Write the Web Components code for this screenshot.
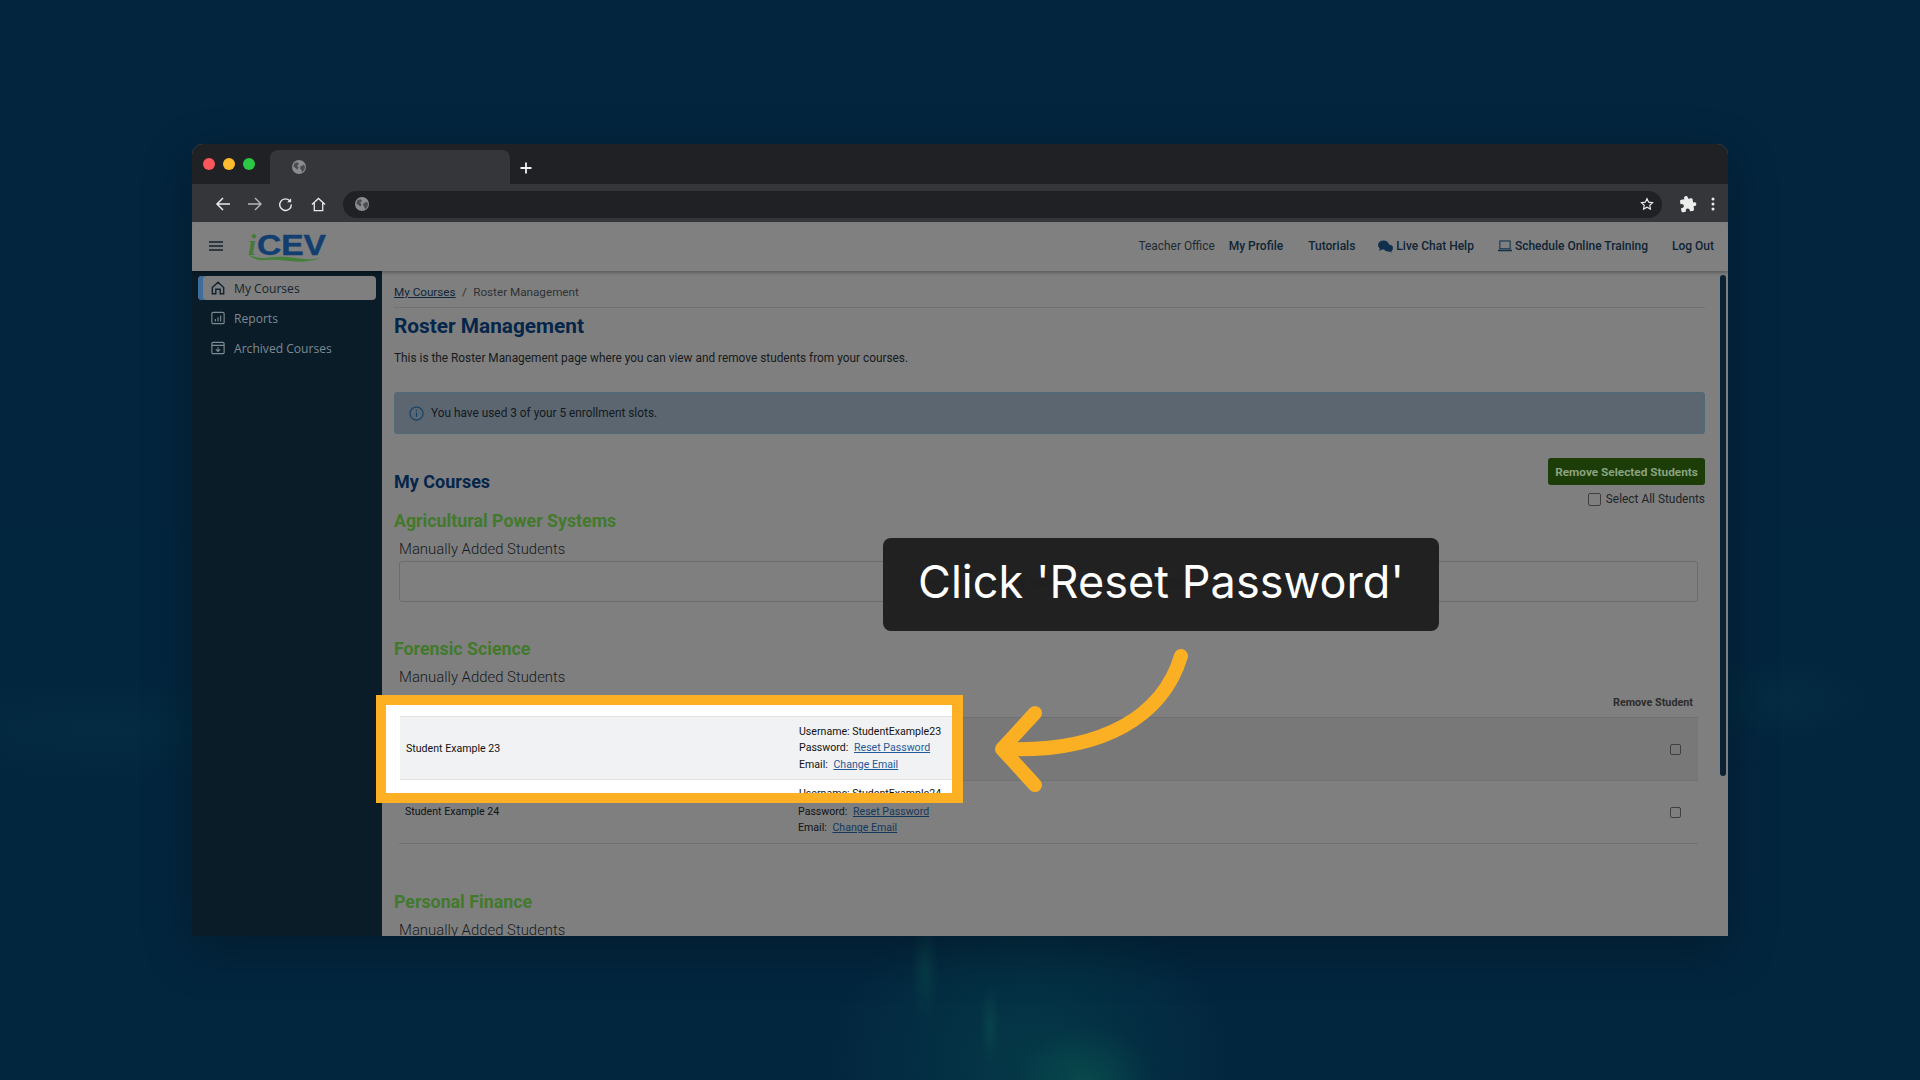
<!DOCTYPE html>
<html>
<head>
<meta charset="utf-8">
<title>Roster Management</title>
<style>
  html, body { margin: 0; padding: 0; height: 100%; overflow: hidden; background: #03243c; }
</style>
</head>
<body>
<tutorial-stage>
  <browser-window>
    <app-header slot="header"></app-header>
    <side-nav slot="side"></side-nav>
    <roster-page slot="main"></roster-page>
  </browser-window>
</tutorial-stage>

<script>
const GLOBE = (size) => `<svg width="${size}" height="${size}" viewBox="0 0 16 16"><circle cx="8" cy="8" r="8" fill="#8a8c8f"/><path d="M3 3.5 6.5 2.5 8 4.5 6 6.5 7.5 8.5 6 11 4 9 1.5 7.5ZM10 7l3.5-1.5 1.5 2.5-1 3.5-2.5 2.5-1-3-1.5-2Z" fill="#4b4d50"/></svg>`;

class TutorialStage extends HTMLElement {
  constructor() {
    super();
    this.attachShadow({ mode: 'open' }).innerHTML = `
      <style>
        :host {
          display: block;
          position: relative;
          width: 1920px;
          height: 1080px;
          box-sizing: border-box;
          padding: 144px 192px;
          overflow: hidden;
          background:
            radial-gradient(ellipse 70px 60px at 1085px 1085px, rgba(14, 105, 85, .42), transparent),
            radial-gradient(ellipse 10px 40px at 990px 1025px, rgba(16, 100, 85, .3), transparent),
            radial-gradient(ellipse 14px 50px at 925px 970px, rgba(16, 100, 85, .3), transparent),
            radial-gradient(ellipse 200px 170px at 1030px 1060px, rgba(6, 75, 80, .5), transparent),
            radial-gradient(ellipse 210px 50px at 100px 730px, rgba(6, 75, 80, .14), transparent),
            radial-gradient(ellipse 90px 40px at 1780px 700px, rgba(6, 75, 80, .16), transparent),
            linear-gradient(#03253e, #03263f);
        }
      </style>
      <slot></slot>
      <highlight-frame></highlight-frame>
      <svg style="position:absolute;left:985px;top:640px" width="210" height="160" viewBox="985 640 210 160" fill="none" stroke="#fbb024" stroke-width="14" stroke-linecap="round" stroke-linejoin="round">
        <path d="M1181 656C1163 716 1103 753 1004 749"/>
        <path d="M1035 713 1002 749 1035 785"/>
      </svg>
      <step-callout>Click 'Reset Password'</step-callout>
    `;
  }
}

class BrowserWindow extends HTMLElement {
  constructor() {
    super();
    this.attachShadow({ mode: 'open' }).innerHTML = `
      <style>
        :host {
          display: flex;
          flex-direction: column;
          width: 1536px;
          height: 792px;
          border-radius: 11px 11px 0 0;
          overflow: hidden;
          background: #7f7f7f;
          box-shadow: 0 14px 50px rgba(0, 0, 0, .28);
          font-family: Roboto, "Liberation Sans", sans-serif;
        }
        .tabs { height: 40px; background: #202124; display: flex; align-items: flex-end; flex: none; }
        .lights { display: flex; gap: 8px; padding: 0 0 14px 11px; width: 67px; box-sizing: content-box; }
        .lights i { width: 12px; height: 12px; border-radius: 50%; }
        .tab {
          width: 240px; height: 34px; background: #35363a; border-radius: 8px 8px 0 0;
          display: flex; align-items: center; padding-left: 22px; box-sizing: border-box; margin-left: 0;
        }
        .plus { margin: 0 0 9px 9px; display: flex; }
        .bar { height: 38px; padding-top: 2px; box-sizing: border-box; background: #35363a; display: flex; align-items: center; flex: none; }
        .nav { display: flex; align-items: center; width: 151px; padding-left: 23px; box-sizing: border-box; }
        .nav svg { display: block; flex: none; }
        .url {
          width: 1319px; height: 27px; background: #202124; border-radius: 14px; flex: none;
          display: flex; align-items: center; justify-content: space-between; padding: 0 8px 0 12px; box-sizing: border-box;
        }
        .ext { display: flex; align-items: center; margin-left: 17px; }
        .body { flex: 1; display: grid; grid-template-columns: 190px 1fr; min-height: 0; }
        .body ::slotted(roster-page) { min-height: 0; }
      </style>
      <div class="tabs">
        <div class="lights"><i style="background:#f9575c"></i><i style="background:#febc2e"></i><i style="background:#2ac845"></i></div>
        <div class="tab">${GLOBE(14)}</div>
        <div class="plus"><svg width="14" height="14" viewBox="0 0 14 14"><path d="M7 1.5v11M1.5 7h11" stroke="#f2f2f2" stroke-width="1.8"/></svg></div>
      </div>
      <div class="bar">
        <div class="nav">
          <svg width="16" height="16" viewBox="0 0 16 16" fill="none" stroke="#e8eaed" stroke-width="1.5" style="margin-right:16px"><path d="M15 8H2M8 2 2 8l6 6"/></svg>
          <svg width="16" height="16" viewBox="0 0 16 16" fill="none" stroke="#b4b6b9" stroke-width="1.4" style="margin-right:15px"><path d="M1 8h13M8 2l6 6-6 6"/></svg>
          <svg width="15" height="15" viewBox="0 0 16 16" fill="none" stroke="#e8eaed" stroke-width="1.5" style="margin-right:18px"><path d="M13 4.5A6.2 6.2 0 1 0 14.2 8"/><path d="M14 1.2v4.3H9.7Z" fill="#e8eaed" stroke="none"/></svg>
          <svg width="15" height="15" viewBox="0 0 16 16" fill="none" stroke="#e8eaed" stroke-width="1.4"><path d="M1 8 8 1.5 15 8M3.5 6.5V14.5h9V6.5"/></svg>
        </div>
        <div class="url">
          ${GLOBE(14)}
          <svg width="14" height="14" viewBox="0 0 24 24" fill="none" stroke="#e8eaed" stroke-width="2"><path d="m12 2.8 2.9 6 6.6.8-4.8 4.6 1.2 6.6-5.9-3.2-5.9 3.2 1.2-6.6L2.5 9.6l6.6-.8Z"/></svg>
        </div>
        <div class="ext">
          <svg width="18" height="18" viewBox="0 0 24 24" fill="#eceded" style="transform:rotate(-8deg)"><path d="M20.5 11H19V7c0-1.1-.9-2-2-2h-4V3.5C13 2.12 11.88 1 10.5 1S8 2.12 8 3.5V5H4c-1.1 0-1.99.9-1.99 2v3.8H3.5c1.49 0 2.7 1.21 2.7 2.7s-1.21 2.7-2.7 2.7H2V20c0 1.1.9 2 2 2h3.8v-1.5c0-1.49 1.21-2.7 2.7-2.7 1.49 0 2.7 1.21 2.7 2.7V22H17c1.1 0 2-.9 2-2v-4h1.5c1.38 0 2.5-1.12 2.5-2.5S21.88 11 20.5 11z"/></svg>
          <svg width="4" height="14" viewBox="0 0 4 14" fill="#e8eaed" style="margin-left:14px"><circle cx="2" cy="2" r="1.5"/><circle cx="2" cy="7" r="1.5"/><circle cx="2" cy="12" r="1.5"/></svg>
        </div>
      </div>
      <slot name="header"></slot>
      <div class="body">
        <slot name="side"></slot>
        <slot name="main"></slot>
      </div>
    `;
  }
}

class AppHeader extends HTMLElement {
  constructor() {
    super();
    this.attachShadow({ mode: 'open' }).innerHTML = `
      <style>
        :host {
          display: flex;
          align-items: center;
          flex: none;
          height: 49px;
          background: #808080;
          border-radius: 8px 8px 0 0;
          box-shadow: 0 2px 3px rgba(0, 0, 0, .25);
          position: relative;
          z-index: 1;
          padding: 0 14px 1px 17px;
          box-sizing: border-box;
          color: #0f2435;
          font: 500 12px Roboto, sans-serif;
        }
        .logo { display: block; margin-left: 25px; }
        nav { margin-left: auto; display: flex; align-items: center; white-space: nowrap; }
        nav span { display: flex; align-items: center; gap: 3px; }
        nav .plain { font-weight: 400; font-size: 11.9px; color: #232b31; }
      </style>
      <svg width="14" height="10" viewBox="0 0 14 10" stroke="#15222c" stroke-width="1.4"><path d="M0 1h14M0 5h14M0 9h14"/></svg>
      <svg class="logo" width="80" height="32" viewBox="0 0 80 32">
        <text x="0" y="25" font-family="Liberation Serif, serif" font-style="italic" font-weight="700" font-size="29" fill="#437a3a">i</text>
        <text x="9" y="25" font-family="Liberation Sans, sans-serif" font-weight="700" font-size="29" fill="#123f70" stroke="#123f70" stroke-width=".5" textLength="69" lengthAdjust="spacingAndGlyphs">CEV</text>
        <path d="M1 25C16 31 22 26 38 27S58 31 72 28C58 34 44 31 30 30S10 33 1 25Z" fill="#437f38"/>
      </svg>
      <nav>
        <span class="plain" style="margin-right:14px">Teacher Office</span>
        <span style="margin-right:25px">My Profile</span>
        <span style="margin-right:23px">Tutorials</span>
        <span style="margin-right:24px">
          <svg width="15" height="13" viewBox="0 0 15 13" fill="#0f2f4d"><ellipse cx="5.5" cy="5" rx="5.5" ry="4.5"/><path d="M2 8 1 11l4-2Z"/><ellipse cx="10.5" cy="8" rx="4.5" ry="3.6"/><path d="m12.5 10 1.5 2.6-4-1.6Z"/></svg>
          Live Chat Help
        </span>
        <span style="margin-right:24px">
          <svg width="14" height="12" viewBox="0 0 15 12" fill="none" stroke="#0f2f4d" stroke-width="1.1"><rect x="2" y=".6" width="11" height="8.4"/><path d="M0 10.8h15" stroke-width="1.5"/></svg>
          Schedule Online Training
        </span>
        <span>Log Out</span>
      </nav>
    `;
  }
}

class SideNav extends HTMLElement {
  constructor() {
    super();
    this.attachShadow({ mode: 'open' }).innerHTML = `
      <style>
        :host {
          display: flex;
          flex-direction: column;
          gap: 6px;
          height: 100%;
          box-sizing: border-box;
          padding: 5px 6px 0 6px;
          background: #0a1c27;
        }
      </style>
      <nav-item active label="My Courses"><svg width="14" height="14" viewBox="0 0 16 16" fill="none" stroke="#12222e" stroke-width="1.6"><path d="M1.5 7.5 8 1.5l6.5 6v7h-4v-5h-5v5h-4Z"/></svg></nav-item>
      <nav-item label="Reports"><svg width="14" height="14" viewBox="0 0 16 16" fill="none" stroke="#7d8a92" stroke-width="1.3"><rect x="1" y="1.5" width="14" height="13" rx="1.5"/><path d="M5 12V9M8 12V7M11 12V5"/></svg></nav-item>
      <nav-item label="Archived Courses"><svg width="14" height="14" viewBox="0 0 16 16" fill="none" stroke="#7d8a92" stroke-width="1.3"><rect x="1" y="1.5" width="14" height="13" rx="1.5"/><path d="M1 5h14M8 7v5M5.5 9.5 8 12l2.5-2.5"/></svg></nav-item>
    `;
  }
}

class NavItem extends HTMLElement {
  constructor() {
    super();
    this.attachShadow({ mode: 'open' });
  }

  connectedCallback() {
    this.shadowRoot.innerHTML = `
      <style>
        :host {
          display: flex;
          align-items: center;
          height: 24px;
          gap: 9px;
          padding-left: 13px;
          border-radius: 4px;
          color: #7d8a92;
          font: 500 12.1px "Open Sans", sans-serif;
        }
        :host([active]) {
          background: #7f7f7f;
          color: #14232e;
          box-shadow: inset 5px 0 0 #3f6d9b;
        }
        ::slotted(svg) { display: block; }
      </style>
      <slot></slot><span>${this.getAttribute('label')}</span>
    `;
  }
}

class RosterPage extends HTMLElement {
  constructor() {
    super();
    this.attachShadow({ mode: 'open' }).innerHTML = `
      <style>
        :host {
          display: block;
          position: relative;
          height: 100%;
          overflow: hidden;
          box-sizing: border-box;
          padding: 13px 23px 0 12px;
          background: #7f7f7f;
          color: #161a1d;
          font: 400 11.85px/16px Roboto, sans-serif;
        }
        .crumbs { color: #2d3236; padding-bottom: 7px; border-bottom: 1px solid #707070; font-size: 11.7px; }
        .crumbs a { color: #10263a; text-decoration: underline; }
        .crumbs i { font-style: normal; margin: 0 3.5px; }
        h1 { margin: 6px 0 0; font: 700 20.8px/24px Roboto, sans-serif; color: #05264a; }
        .lead { margin: 12px 0 0; }
        .alert {
          margin-top: 26px;
          height: 42px;
          box-sizing: border-box;
          display: flex;
          align-items: center;
          gap: 7px;
          padding-left: 14px;
          background: #5b6670;
          border: 1px solid #4f6a78;
          border-radius: 3px;
          color: #14191e;
        }
        .head { margin-top: 24px; display: flex; justify-content: space-between; height: 49px; }
        h2 { margin: 12px 0 0; font: 700 18px/24px Roboto, sans-serif; color: #05264a; }
        .actions { display: flex; flex-direction: column; align-items: flex-end; }
        .remove {
          height: 27px; width: 157px; display: flex; align-items: center; justify-content: center;
          background: #1c3c08; color: #8aa380; font-weight: 700; font-size: 11.8px; border-radius: 3px;
        }
        .all { display: flex; align-items: center; gap: 5px; margin-top: 6px; color: #1f2428; font-size: 11.9px; }
        .box { width: 11px; height: 11px; border: 1px solid #3f3f3f; border-radius: 2px; }
        .scroll { position: absolute; right: 2px; top: 4px; width: 6px; height: 501px; border-radius: 3px; background: #0a2233; }
        .empty {
          height: 41px; display: flex; align-items: center; justify-content: center;
          border: 1px solid #6c6c6c; border-radius: 3px; box-sizing: border-box; margin-top: 1px;
        }
        .table-head { margin-top: 7px; height: 22px; text-align: right; padding-right: 5px; font-weight: 700; color: #2c2c2c; font-size: 10.8px; }
      </style>
      <div class="crumbs"><a>My Courses</a> <i>/</i> Roster Management</div>
      <h1>Roster Management</h1>
      <p class="lead">This is the Roster Management page where you can view and remove students from your courses.</p>
      <div class="alert">
        <svg width="15" height="15" viewBox="0 0 16 16" fill="none" stroke="#0f3f66" stroke-width="1.2"><circle cx="8" cy="8" r="7"/><path d="M8 7v4.5M8 4.2v1.4"/></svg>
        You have used 3 of your 5 enrollment slots.
      </div>
      <div class="head">
        <h2>My Courses</h2>
        <div class="actions">
          <div class="remove">Remove Selected Students</div>
          <div class="all"><div class="box"></div>Select All Students</div>
        </div>
      </div>
      <course-section title="Agricultural Power Systems" top="2">
        <div class="empty">There are no manually added students in this course.</div>
      </course-section>
      <course-section title="Forensic Science" top="35">
        <div class="table-head">Remove Student</div>
        <student-row name="Student Example 23" user="StudentExample23" shaded></student-row>
        <student-row name="Student Example 24" user="StudentExample24"></student-row>
      </course-section>
      <course-section title="Personal Finance" top="46"></course-section>
      <div class="scroll"></div>
    `;
  }
}

class CourseSection extends HTMLElement {
  constructor() {
    super();
    this.attachShadow({ mode: 'open' });
  }

  connectedCallback() {
    this.shadowRoot.innerHTML = `
      <style>
        :host { display: block; margin-top: ${this.getAttribute('top')}px; }
        h3 { margin: 0; font: 700 17.8px/24px Roboto, sans-serif; color: #42792c; }
        .sub { margin: 6px 0 0 5px; font: 300 14.9px/21px Roboto, sans-serif; color: #161a1d; }
        .body { margin-left: 5px; margin-right: 7px; }
      </style>
      <h3>${this.getAttribute('title')}</h3>
      <div class="sub">Manually Added Students</div>
      <div class="body"><slot></slot></div>
    `;
  }
}

class StudentRow extends HTMLElement {
  constructor() {
    super();
    this.attachShadow({ mode: 'open' });
  }

  connectedCallback() {
    this.shadowRoot.innerHTML = `
      <style>
        :host {
          display: grid;
          grid-template-columns: 399px 1fr 40px;
          align-items: center;
          width: 1299px;
          height: 63px;
          box-sizing: border-box;
          border-bottom: 1px solid var(--row-line, #707070);
          color: var(--row-ink, #101214);
          font: 400 10.6px/16.5px Roboto, sans-serif;
        }
        :host([shaded]) { height: 64px; background: var(--row-shade, #787878); border-top: 1px solid var(--row-line, #707070); }
        :host([shaded]) .name { margin-top: 3px; }
        :host([shaded]) .info { padding-top: 1px; }
        .name { padding-left: 6px; }
        a { color: var(--row-link, #14375c); text-decoration: underline; margin-left: 3px; }
        .box { width: 9px; height: 9px; justify-self: end; margin-right: 17px; border: 1px solid #3f3f3f; border-radius: 2px; }
      </style>
      <div class="name">${this.getAttribute('name')}</div>
      <div class="info">
        <div>Username: ${this.getAttribute('user')}</div>
        <div>Password: <a>Reset Password</a></div>
        <div>Email: <a>Change Email</a></div>
      </div>
      <div class="box"></div>
    `;
  }
}

class HighlightFrame extends HTMLElement {
  constructor() {
    super();
    this.attachShadow({ mode: 'open' }).innerHTML = `
      <style>
        :host {
          position: absolute;
          left: 376px;
          top: 695px;
          width: 587px;
          height: 108px;
          box-sizing: border-box;
          border: 10px solid #fdb023;
          border-right-width: 11px;
          background: #fff;
          overflow: hidden;
          padding: 11px 0 0 14px;
          --row-line: #e3e3e3;
          --row-shade: #f1f2f3;
          --row-ink: #111;
          --row-link: #245a96;
        }
      </style>
      <student-row name="Student Example 23" user="StudentExample23" shaded></student-row>
      <student-row name="Student Example 24" user="StudentExample24"></student-row>
    `;
  }
}

class StepCallout extends HTMLElement {
  constructor() {
    super();
    this.attachShadow({ mode: 'open' }).innerHTML = `
      <style>
        :host {
          position: absolute;
          left: 883px;
          top: 538px;
          width: 556px;
          height: 93px;
          box-sizing: border-box;
          padding-bottom: 6px;
          display: flex;
          align-items: center;
          justify-content: center;
          background: rgba(30, 30, 30, .97);
          border-radius: 8px;
          color: #fff;
          font: 400 45px Inter, sans-serif;
          letter-spacing: .05px;
          white-space: nowrap;
        }
      </style>
      <slot></slot>
    `;
  }
}

customElements.define('student-row', StudentRow);
customElements.define('course-section', CourseSection);
customElements.define('nav-item', NavItem);
customElements.define('side-nav', SideNav);
customElements.define('app-header', AppHeader);
customElements.define('roster-page', RosterPage);
customElements.define('browser-window', BrowserWindow);
customElements.define('highlight-frame', HighlightFrame);
customElements.define('step-callout', StepCallout);
customElements.define('tutorial-stage', TutorialStage);
</script>
</body>
</html>
